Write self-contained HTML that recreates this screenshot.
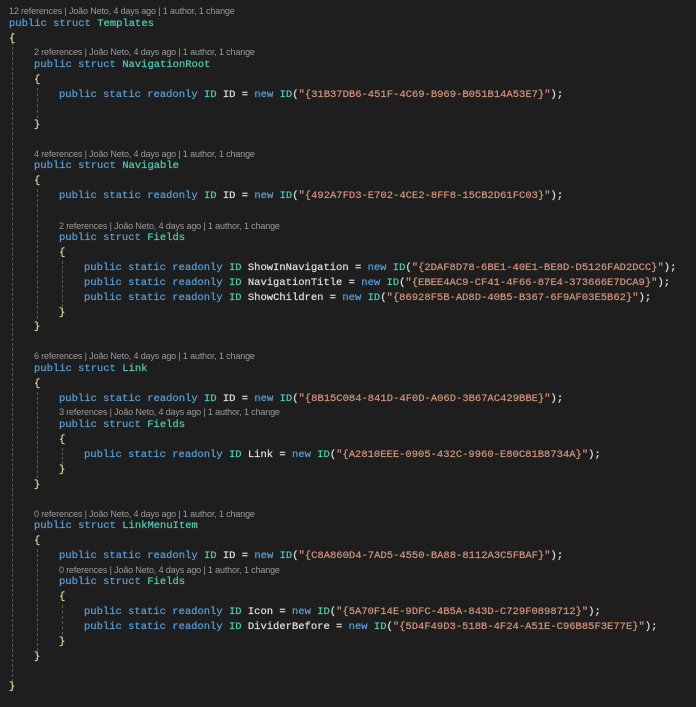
<!DOCTYPE html>
<html><head><meta charset="utf-8"><style>
body{margin:0;width:696px;height:707px;background:#1e1e1e;overflow:hidden;position:relative}
.l{position:absolute;white-space:pre;font-family:"Liberation Mono",monospace;font-size:10.5px;line-height:14px;color:#dcdcdc;-webkit-text-stroke:0.25px}
.c{position:absolute;white-space:pre;font-family:"Liberation Sans",sans-serif;font-size:9px;line-height:12px;color:#9a9a9a;letter-spacing:-0.15px}
.k{color:#569cd6}.t{color:#4ec9b0}.s{color:#ce9178}.b,.p,.q{color:#e2d49a}
.g{position:absolute;width:0;border-left:1px dashed #5a5a5a}
</style></head><body>
<div class="g" style="left:12px;top:32px;height:650px"></div>
<div class="g" style="left:37px;top:88px;height:30px"></div>
<div class="g" style="left:37px;top:189px;height:130px"></div>
<div class="g" style="left:62px;top:261px;height:46px"></div>
<div class="g" style="left:37px;top:392px;height:86px"></div>
<div class="g" style="left:62px;top:448px;height:16px"></div>
<div class="g" style="left:37px;top:549px;height:102px"></div>
<div class="g" style="left:62px;top:605px;height:30px"></div>

<div class="c" style="left:9px;top:5px">12 references | João Neto, 4 days ago | 1 author, 1 change</div>
<div class="l" style="left:9px;top:17px"><span class="k">public struct</span> <span class="t">Templates</span></div>
<div class="l b" style="left:9px;top:32px">{</div>

<div class="c" style="left:34px;top:46px">2 references | João Neto, 4 days ago | 1 author, 1 change</div>
<div class="l" style="left:34px;top:58px"><span class="k">public struct</span> <span class="t">NavigationRoot</span></div>
<div class="l p" style="left:34px;top:73px">{</div>
<div class="l" style="left:59px;top:88px"><span class="k">public static readonly</span> <span class="t">ID</span> ID = <span class="k">new</span> <span class="t">ID</span>(<span class="s">"{31B37DB6-451F-4C69-B969-B051B14A53E7}"</span>);</div>
<div class="l p" style="left:34px;top:118px">}</div>

<div class="c" style="left:34px;top:148px">4 references | João Neto, 4 days ago | 1 author, 1 change</div>
<div class="l" style="left:34px;top:159px"><span class="k">public struct</span> <span class="t">Navigable</span></div>
<div class="l p" style="left:34px;top:174px">{</div>
<div class="l" style="left:59px;top:189px"><span class="k">public static readonly</span> <span class="t">ID</span> ID = <span class="k">new</span> <span class="t">ID</span>(<span class="s">"{492A7FD3-E702-4CE2-8FF8-15CB2D61FC03}"</span>);</div>
<div class="c" style="left:59px;top:220px">2 references | João Neto, 4 days ago | 1 author, 1 change</div>
<div class="l" style="left:59px;top:231px"><span class="k">public struct</span> <span class="t">Fields</span></div>
<div class="l q" style="left:59px;top:246px">{</div>
<div class="l" style="left:84px;top:261px"><span class="k">public static readonly</span> <span class="t">ID</span> ShowInNavigation = <span class="k">new</span> <span class="t">ID</span>(<span class="s">"{2DAF8D78-6BE1-40E1-BE8D-D5126FAD2DCC}"</span>);</div>
<div class="l" style="left:84px;top:276px"><span class="k">public static readonly</span> <span class="t">ID</span> NavigationTitle = <span class="k">new</span> <span class="t">ID</span>(<span class="s">"{EBEE4AC9-CF41-4F66-87E4-373666E7DCA9}"</span>);</div>
<div class="l" style="left:84px;top:291px"><span class="k">public static readonly</span> <span class="t">ID</span> ShowChildren = <span class="k">new</span> <span class="t">ID</span>(<span class="s">"{86928F5B-AD8D-40B5-B367-6F9AF03E5B62}"</span>);</div>
<div class="l q" style="left:59px;top:306px">}</div>
<div class="l p" style="left:34px;top:320px">}</div>

<div class="c" style="left:34px;top:350px">6 references | João Neto, 4 days ago | 1 author, 1 change</div>
<div class="l" style="left:34px;top:362px"><span class="k">public struct</span> <span class="t">Link</span></div>
<div class="l p" style="left:34px;top:377px">{</div>
<div class="l" style="left:59px;top:392px"><span class="k">public static readonly</span> <span class="t">ID</span> ID = <span class="k">new</span> <span class="t">ID</span>(<span class="s">"{8B15C084-841D-4F0D-A06D-3B67AC429BBE}"</span>);</div>
<div class="c" style="left:59px;top:406px">3 references | João Neto, 4 days ago | 1 author, 1 change</div>
<div class="l" style="left:59px;top:418px"><span class="k">public struct</span> <span class="t">Fields</span></div>
<div class="l q" style="left:59px;top:433px">{</div>
<div class="l" style="left:84px;top:448px"><span class="k">public static readonly</span> <span class="t">ID</span> Link = <span class="k">new</span> <span class="t">ID</span>(<span class="s">"{A2810EEE-0905-432C-9960-E80C81B8734A}"</span>);</div>
<div class="l q" style="left:59px;top:463px">}</div>
<div class="l p" style="left:34px;top:478px">}</div>

<div class="c" style="left:34px;top:508px">0 references | João Neto, 4 days ago | 1 author, 1 change</div>
<div class="l" style="left:34px;top:519px"><span class="k">public struct</span> <span class="t">LinkMenuItem</span></div>
<div class="l p" style="left:34px;top:534px">{</div>
<div class="l" style="left:59px;top:549px"><span class="k">public static readonly</span> <span class="t">ID</span> ID = <span class="k">new</span> <span class="t">ID</span>(<span class="s">"{C8A860D4-7AD5-4550-BA88-8112A3C5FBAF}"</span>);</div>
<div class="c" style="left:59px;top:564px">0 references | João Neto, 4 days ago | 1 author, 1 change</div>
<div class="l" style="left:59px;top:575px"><span class="k">public struct</span> <span class="t">Fields</span></div>
<div class="l q" style="left:59px;top:590px">{</div>
<div class="l" style="left:84px;top:605px"><span class="k">public static readonly</span> <span class="t">ID</span> Icon = <span class="k">new</span> <span class="t">ID</span>(<span class="s">"{5A70F14E-9DFC-4B5A-843D-C729F0898712}"</span>);</div>
<div class="l" style="left:84px;top:620px"><span class="k">public static readonly</span> <span class="t">ID</span> DividerBefore = <span class="k">new</span> <span class="t">ID</span>(<span class="s">"{5D4F49D3-518B-4F24-A51E-C96B85F3E77E}"</span>);</div>
<div class="l q" style="left:59px;top:635px">}</div>
<div class="l p" style="left:34px;top:650px">}</div>
<div class="l b" style="left:9px;top:680px">}</div>
</body></html>
